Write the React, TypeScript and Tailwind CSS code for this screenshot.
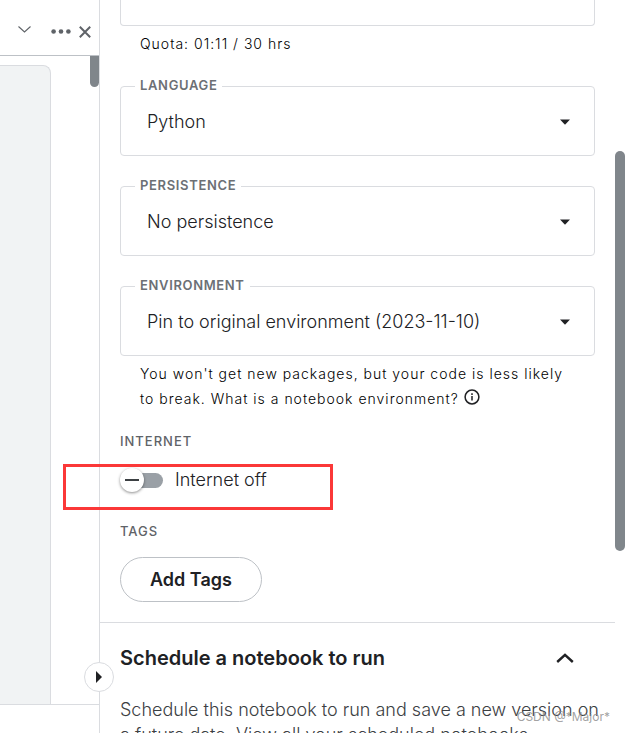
import { useState } from "react";

type FieldProps = {
  id: string;
  label: string;
  options: string[];
};

function SelectField({ id, label, options }: FieldProps) {
  return (
    <div className="relative h-[70px] rounded border border-[#dadce0]">
      <label
        htmlFor={id}
        className="absolute -top-[10px] left-[14px] bg-white px-[5px] text-[13px] leading-4 font-semibold tracking-wider text-[#6c7075]"
      >
        {label}
      </label>
      <select
        id={id}
        className="h-full w-full appearance-none bg-transparent pt-[2px] pr-12 pl-[26px] text-lg font-light text-[#202124] outline-none"
      >
        {options.map((option) => (
          <option key={option}>{option}</option>
        ))}
      </select>
      <svg className="pointer-events-none absolute top-8 right-6 h-[6px] w-[10px]" viewBox="0 0 10 6" fill="#202124">
        <path d="M0 .5h10L5 5.700z" />
      </svg>
    </div>
  );
}

function InternetSwitch() {
  const [on, setOn] = useState(false);
  return (
    <label className="flex h-6 items-center gap-3 text-lg font-light text-[#202124]">
      <input
        type="checkbox"
        role="switch"
        className="peer sr-only"
        checked={on}
        onChange={(e) => setOn(e.target.checked)}
      />
      <span className="relative flex h-6 w-[43px] items-center justify-end">
        <span className="h-[15px] w-9 rounded-full bg-[#9aa0a6]" />
        <span
          className={`absolute top-0 flex size-6 items-center justify-center rounded-full bg-white shadow-[0_1px_3px_rgba(0,0,0,0.45)] ${on ? "right-0" : "left-0"}`}
        >
          <span className="h-[2px] w-[14px] bg-[#3c4043]" />
        </span>
      </span>
      Internet {on ? "on" : "off"}
    </label>
  );
}

function EditorEdge() {
  return (
    <div className="flex w-[100px] shrink-0 flex-col border-r border-[#dadce0]">
      <div className="flex h-14 shrink-0 items-center justify-end border-b border-[#bdc1c6] pt-2 pr-2">
        <button type="button" aria-label="Expand" className="mr-5 mb-1">
          <svg className="h-[7px] w-[13px]" viewBox="0 0 13 7" fill="none" stroke="#5f6368" strokeWidth="1.1">
            <path d="M.5.5l6 5.500 6-5.500" />
          </svg>
        </button>
        <button type="button" aria-label="More" className="mr-2">
          <svg className="h-[5px] w-5" viewBox="0 0 20 5" fill="#5f6368">
            <circle cx="2.6" cy="2.5" r="2.3" />
            <circle cx="10" cy="2.5" r="2.3" />
            <circle cx="17.4" cy="2.5" r="2.3" />
          </svg>
        </button>
        <button type="button" aria-label="Close">
          <svg className="size-3" viewBox="0 0 12 12" fill="none" stroke="#5f6368" strokeWidth="2">
            <path d="M.8.8l10.400 10.400M11.200.8L.8 11.200" />
          </svg>
        </button>
      </div>
      <div className="flex flex-1 justify-between border-b border-[#dadce0]">
        <div className="mt-[9px] w-[51px] rounded-tr-lg border-t border-r border-[#dadce0] bg-[#f1f3f4]" />
        <div className="h-[31px] w-[9px] rounded-b-full bg-[#80868b]" />
      </div>
      <div className="h-7 shrink-0" />
    </div>
  );
}

export default function App() {
  return (
    <div className="relative flex h-screen overflow-hidden bg-white font-[Inter,'Liberation_Sans',sans-serif] text-[#202124]">
      <EditorEdge />

      {/* Notebook options */}
      <div className="min-w-0 flex-1 overflow-hidden">
        <div className="px-5">
          <div className="h-[26px] rounded-b border-x border-b border-[#dadce0]" />
          <p className="mt-[5px] px-5 text-sm leading-[25px] font-light tracking-[1px] text-black">Quota: 01:11 / 30 hrs</p>

          <div className="mt-[30px] flex flex-col gap-[30px]">
            <SelectField id="language" label="LANGUAGE" options={["Python", "R"]} />
            <SelectField id="persistence" label="PERSISTENCE" options={["No persistence", "Files only"]} />
            <SelectField
              id="environment"
              label="ENVIRONMENT"
              options={["Pin to original environment (2023-11-10)", "Always use latest environment"]}
            />
          </div>

          <p className="mt-[5px] px-5 text-sm leading-[25px] font-light tracking-[1px] text-black">
            You won't get new packages, but your code is less likely to break. What is a notebook environment?{" "}
            <svg
              className="inline-block size-4 align-[-1px]"
              viewBox="0 0 16 16"
              fill="none"
              stroke="#202124"
              strokeWidth="1.5"
            >
              <circle cx="8" cy="8" r="6.9" />
              <path d="M8 7v4.600M8 4.300v1.600" />
            </svg>
          </p>

          <h3 className="mt-[22px] text-[13px] leading-4 font-medium tracking-[1px] text-[#5f6368]">INTERNET</h3>
          <div className="mt-[19px]">
            <InternetSwitch />
          </div>

          <h3 className="mt-[31px] text-[13px] leading-4 font-medium tracking-[1px] text-[#5f6368]">TAGS</h3>
          <button
            type="button"
            className="mt-[18px] flex h-[45px] items-center rounded-full border border-[#bdc1c6] px-[29px] text-lg font-semibold"
          >
            Add Tags
          </button>
        </div>

        {/* Schedule */}
        <div className="mt-5 border-t border-[#dadce0] pt-5 pl-5">
          <button type="button" className="flex h-[30px] w-full items-center justify-between pr-[41px] text-xl font-semibold">
            Schedule a notebook to run
            <svg className="h-[11px] w-[18px]" viewBox="0 0 18 11" fill="none" stroke="#202124" strokeWidth="2.4">
              <path d="M1.200 9L9 1.800l7.800 7.200" />
            </svg>
          </button>
          <p className="mt-6 pr-3 text-lg leading-[25px] font-light text-[#3c4043]">
            Schedule this notebook to run and save a new version on a future date. View all your scheduled notebooks.
          </p>
        </div>
      </div>

      {/* Scroll bar */}
      <div className="w-[10px] shrink-0 pt-[151px]">
        <div className="h-[400px] rounded-full bg-[#80868b]" />
      </div>

      <button
        type="button"
        aria-label="Collapse panel"
        className="absolute bottom-[41px] left-[84px] flex size-[30px] items-center justify-center rounded-full border border-[#dadce0] bg-white"
      >
        <svg className="h-3 w-[6px]" viewBox="0 0 6 12" fill="#202124">
          <path d="M0 0l6 6-6 6z" />
        </svg>
      </button>
      <div className="pointer-events-none absolute top-[464px] left-[63px] h-[46px] w-[270px] border-3 border-[#fb3838]" />
      <span className="absolute right-[15px] bottom-2 text-xs leading-4 text-[#8a8a8a]/80">CSDN @*Major*</span>
    </div>
  );
}
